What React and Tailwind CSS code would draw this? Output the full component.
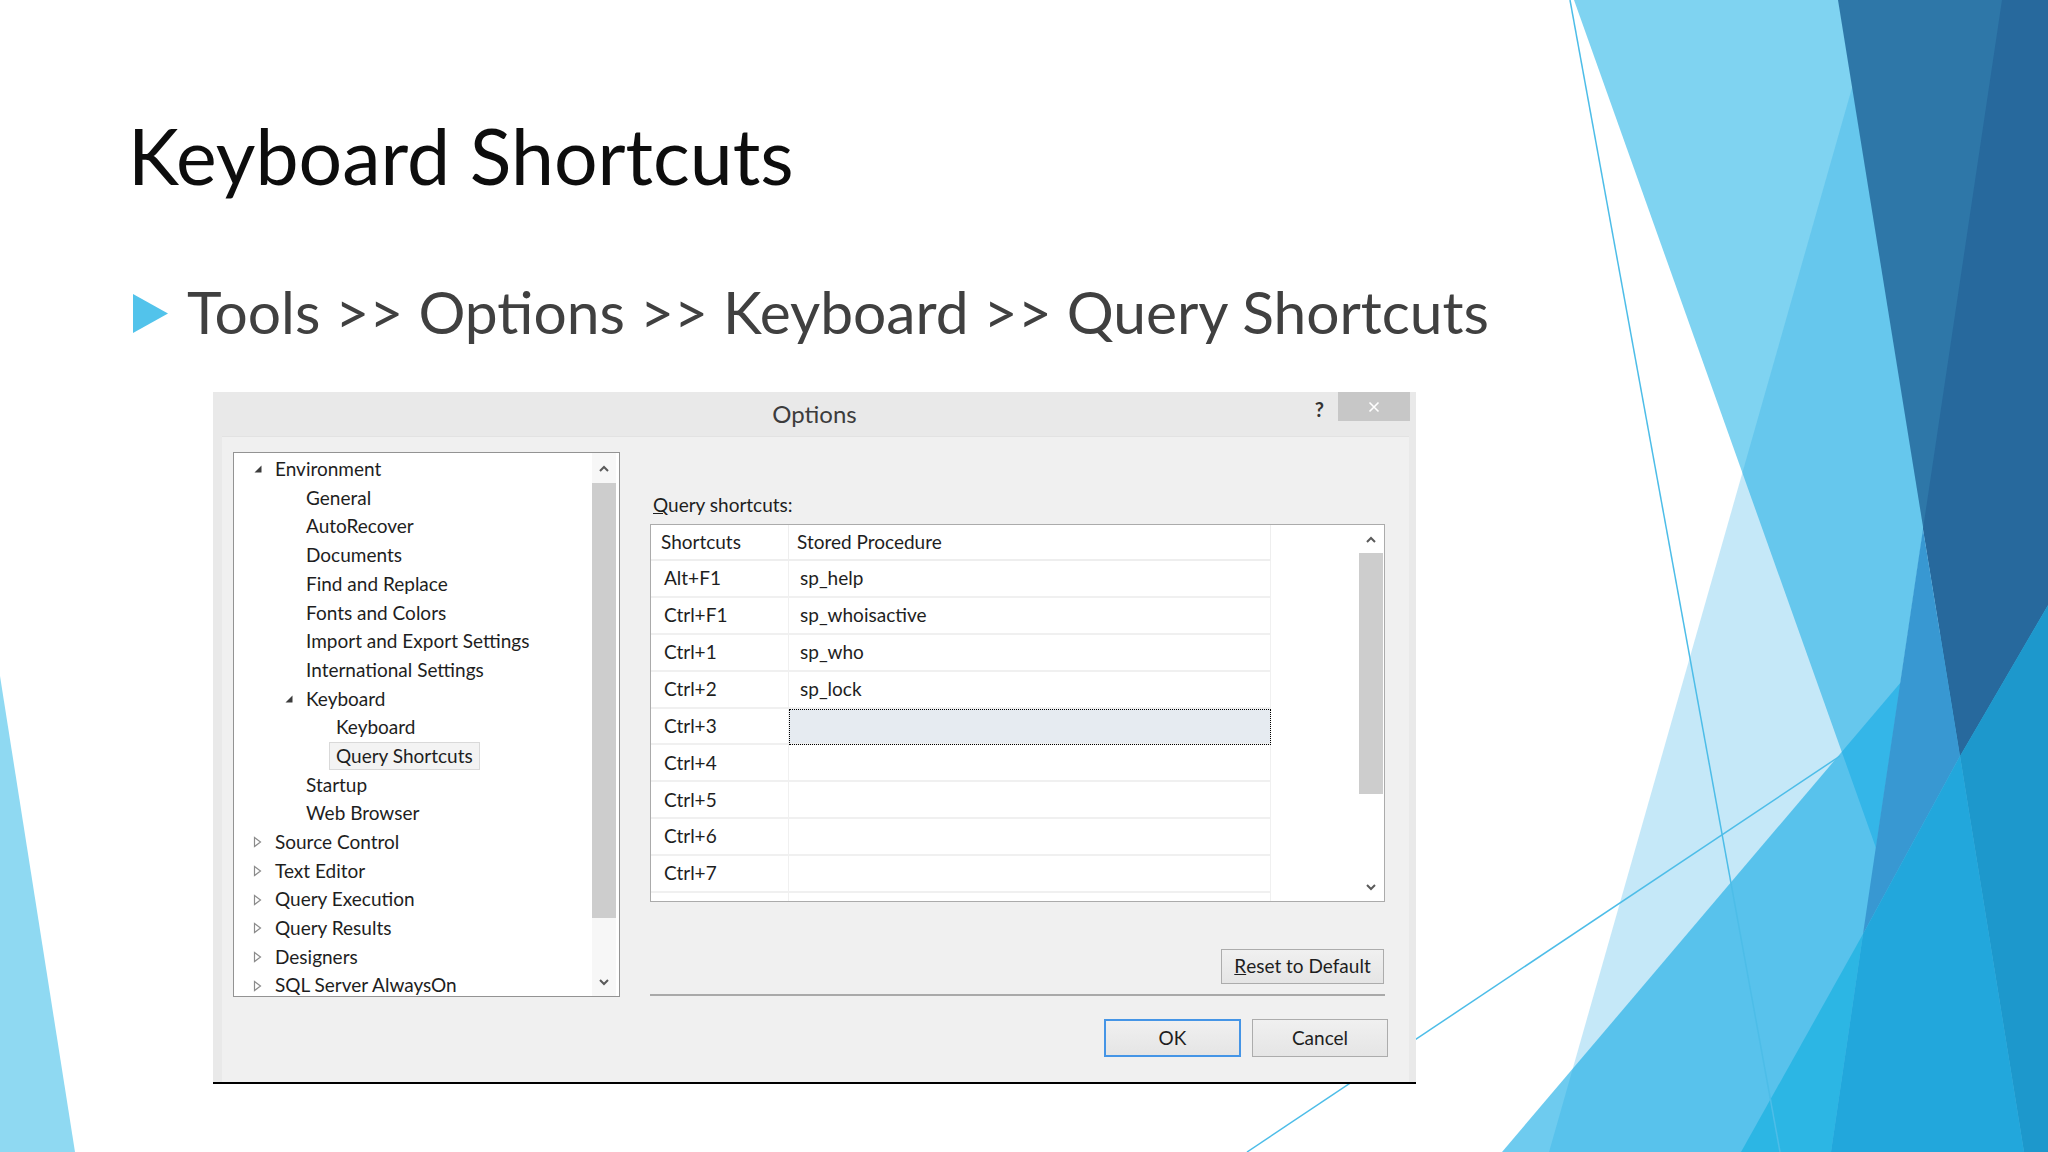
import React from "react";

const treeItems = [
  { label: "Environment", level: 0, state: "open" },
  { label: "General", level: 1 },
  { label: "AutoRecover", level: 1 },
  { label: "Documents", level: 1 },
  { label: "Find and Replace", level: 1 },
  { label: "Fonts and Colors", level: 1 },
  { label: "Import and Export Settings", level: 1 },
  { label: "International Settings", level: 1 },
  { label: "Keyboard", level: 1, state: "open" },
  { label: "Keyboard", level: 2 },
  { label: "Query Shortcuts", level: 2, selected: true },
  { label: "Startup", level: 1 },
  { label: "Web Browser", level: 1 },
  { label: "Source Control", level: 0, state: "closed" },
  { label: "Text Editor", level: 0, state: "closed" },
  { label: "Query Execution", level: 0, state: "closed" },
  { label: "Query Results", level: 0, state: "closed" },
  { label: "Designers", level: 0, state: "closed" },
  { label: "SQL Server AlwaysOn", level: 0, state: "closed" },
];

const indent = { 0: "pl-[19px]", 1: "pl-[50px]", 2: "pl-[80px]" };

const shortcuts = [
  { key: "Alt+F1", proc: "sp_help" },
  { key: "Ctrl+F1", proc: "sp_whoisactive" },
  { key: "Ctrl+1", proc: "sp_who" },
  { key: "Ctrl+2", proc: "sp_lock" },
  { key: "Ctrl+3", proc: "", focused: true },
  { key: "Ctrl+4", proc: "" },
  { key: "Ctrl+5", proc: "" },
  { key: "Ctrl+6", proc: "" },
  { key: "Ctrl+7", proc: "" },
  { key: "Ctrl+8", proc: "" },
];

const ChevronUp = () => (
  <svg width="10" height="7" viewBox="0 0 10 7">
    <path d="M1 6 L5 2 L9 6" stroke="#5a5a5a" strokeWidth="2" fill="none" />
  </svg>
);

const ChevronDown = () => (
  <svg width="10" height="7" viewBox="0 0 10 7">
    <path d="M1 1 L5 5 L9 1" stroke="#5a5a5a" strokeWidth="2" fill="none" />
  </svg>
);

const Expander = ({ state }) => {
  if (state === "open")
    return (
      <svg width="10" height="10" viewBox="0 0 10 10">
        <polygon points="8.5,1.5 8.5,8.5 1.5,8.5" fill="#3c3c3c" />
      </svg>
    );
  if (state === "closed")
    return (
      <svg width="9" height="12" viewBox="0 0 9 12">
        <polygon points="1.5,1.5 7.5,6 1.5,10.5" fill="none" stroke="#8c8c8c" strokeWidth="1.2" />
      </svg>
    );
  return null;
};

const Backdrop = () => (
  <svg className="absolute inset-0" width="2048" height="1152" viewBox="0 0 2048 1152">
    <polygon points="0,676 75,1152 0,1152" fill="#8fd9f2" />
    <polygon points="1574,0 2002,0 1876,848" fill="#7fd3f1" />
    <polygon points="1877,0 2048,0 2048,1152 1549,1152" fill="#1ea6e5" opacity="0.26" />
    <polygon points="1502,1152 2048,509 2048,1152" fill="#15abe5" opacity="0.62" />
    <polygon points="1838,0 2048,0 2048,605 1960,756" fill="#2e77a8" />
    <polygon points="2002,0 2048,0 2048,605 1960,756 1923,529" fill="#27699d" />
    <polygon points="1923,529 1960,756 1863,934" fill="#3898d2" />
    <polygon points="1863,934 1741,1152 1831,1152" fill="#2cb6e4" />
    <polygon points="1960,756 1863,934 1831,1152 2024,1152" fill="#22a7dc" />
    <polygon points="2048,605 1960,756 2024,1152 2048,1152" fill="#1d98cc" />
    <line x1="1570" y1="0" x2="1780" y2="1152" stroke="#4dbde8" strokeWidth="1.5" />
    <line x1="1247" y1="1152" x2="1840" y2="756" stroke="#4dbde8" strokeWidth="1.5" />
  </svg>
);

const TreePanel = () => (
  <div className="w-[387px] h-[545px] border border-[#939393] bg-white flex overflow-hidden">
    <div className="flex-1 pt-[2px] overflow-hidden">
      {treeItems.map((item, i) => (
        <div key={i} className={`h-[28.7px] flex items-center ${indent[item.level]}`}>
          <div className="w-[22px] flex items-center">
            <Expander state={item.state} />
          </div>
          {item.selected ? (
            <span className="-ml-[7px] px-[6px] h-[28px] flex items-center bg-[#f3f3f3] border border-[#d9d9d9] whitespace-nowrap">
              {item.label}
            </span>
          ) : (
            <span className="whitespace-nowrap">{item.label}</span>
          )}
        </div>
      ))}
    </div>
    <div className="w-[24px] mr-[3px] bg-[#f7f7f7] flex flex-col">
      <div className="h-[30px] flex items-center justify-center">
        <ChevronUp />
      </div>
      <div className="h-[435px] bg-[#cdcdcd]" />
      <div className="flex-1 flex items-end justify-center pb-[10px]">
        <ChevronDown />
      </div>
    </div>
  </div>
);

const ShortcutTable = () => (
  <div className="w-[735px] h-[378px] border border-[#ababab] bg-white flex overflow-hidden">
    <div className="flex-1 overflow-hidden">
      <div className="h-[36px] flex">
        <div className="w-[138px] pl-[10px] flex items-center border-r border-b-2 border-[#eeeeee]">Shortcuts</div>
        <div className="w-[482px] pl-[8px] flex items-center border-r border-b-2 border-[#eeeeee]">Stored Procedure</div>
      </div>
      {shortcuts.map((row) => (
        <div key={row.key} className="h-[36.9px] flex">
          <div className="w-[138px] pl-[13px] flex items-center border-r border-b-2 border-[#f0f0f0]">{row.key}</div>
          <div
            className={`w-[482px] pl-[11px] flex items-center border-r border-b-2 border-[#f0f0f0] ${
              row.focused ? "bg-[#e6ebf1] outline-1 outline-dotted outline-black -outline-offset-1" : ""
            }`}
          >
            {row.proc}
          </div>
        </div>
      ))}
    </div>
    <div className="w-[26px] flex flex-col">
      <div className="h-[28px] flex items-center justify-center">
        <ChevronUp />
      </div>
      <div className="h-[241px] mx-[1px] bg-[#cdcdcd]" />
      <div className="flex-1 flex items-end justify-center pb-[10px]">
        <ChevronDown />
      </div>
    </div>
  </div>
);

const OptionsDialog = () => (
  <div className="ml-[85px] mt-[47px] w-[1203px] h-[692px] bg-[#e9e9e9] border-b-2 border-black flex flex-col text-[19px] text-[#1e1e1e]">
    <div className="h-[44px] flex">
      <div className="flex-1" />
      <div className="flex items-center text-[24px] text-[#3c3c3c] pb-[1px]">Options</div>
      <div className="flex-1 flex justify-end items-start">
        <span className="mt-[2px] mr-[14px] text-[20px] font-bold text-[#333333]">?</span>
        <div className="w-[72px] h-[29px] mr-[6px] bg-[#c7c7c7] flex items-center justify-center">
          <svg width="12" height="12" viewBox="0 0 12 12">
            <path d="M1.5 1.5 L10.5 10.5 M10.5 1.5 L1.5 10.5" stroke="#ffffff" strokeWidth="1.6" />
          </svg>
        </div>
      </div>
    </div>
    <div className="flex-1 ml-[9px] mr-[7px] bg-[#f0f0f0] border-t border-[#e2e2e2] flex pl-[11px] pt-[15px]">
      <TreePanel />
      <div className="ml-[30px] w-[738px] flex flex-col">
        <div className="mt-[41px] h-[24px] leading-[24px] pl-[3px]">
          <span className="underline">Q</span>uery shortcuts:
        </div>
        <div className="mt-[7px]">
          <ShortcutTable />
        </div>
        <div className="mt-[47px] ml-[571px] w-[163px] h-[35px] border border-[#acacac] bg-gradient-to-b from-[#f0f0f0] to-[#e5e5e5] flex items-center justify-center">
          <span className="underline">R</span>eset to Default
        </div>
        <div className="mt-[10px] w-[735px] h-[2px] bg-[#a9a9a9]" />
        <div className="mt-[23px] ml-[454px] flex gap-[11px]">
          <div className="w-[137px] h-[38px] border-2 border-[#4595e6] bg-gradient-to-b from-[#f0f0f0] to-[#e5e5e5] flex items-center justify-center">
            OK
          </div>
          <div className="w-[136px] h-[38px] border border-[#acacac] bg-gradient-to-b from-[#f0f0f0] to-[#e5e5e5] flex items-center justify-center">
            Cancel
          </div>
        </div>
      </div>
    </div>
  </div>
);

export default function App() {
  return (
    <div className="relative w-[2048px] h-[1152px] overflow-hidden bg-white font-['Lato','Liberation_Sans',sans-serif]">
      <Backdrop />
      <div className="relative pl-[128px] pt-[117px]">
        <h1 className="h-[78px] text-[77px] leading-none text-[#0d0d0d]">Keyboard Shortcuts</h1>
        <div className="mt-[88px] h-[59px] flex items-center">
          <svg className="ml-[5px] mt-[2px]" width="35" height="39" viewBox="0 0 35 39">
            <polygon points="0,0 35,19.5 0,39" fill="#52c3eb" />
          </svg>
          <span className="ml-[19px] text-[58.7px] leading-none text-[#404040]">
            {"Tools >> Options >> Keyboard >> Query Shortcuts"}
          </span>
        </div>
        <div className="h-[3px]" />
        <OptionsDialog />
      </div>
    </div>
  );
}
